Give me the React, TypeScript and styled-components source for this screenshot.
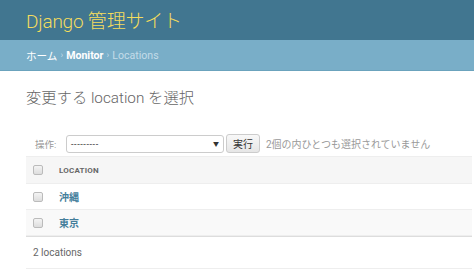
import { createGlobalStyle, styled } from 'styled-components';

const GlobalStyle = createGlobalStyle`
	html, body {
		margin: 0;
		padding: 0;
		background: #fff;
		font-family: Roboto, "Noto Sans CJK JP", "Liberation Sans", sans-serif;
		color: #333;
		overflow: hidden;
	}
`;

const Header = styled.header`
	height: 40px;
	background: #417690;
	display: flex;
	align-items: center;
	padding: 0 26px 2px;
	box-sizing: border-box;
`;

const Branding = styled.h1`
	margin: 0;
	font-size: 19px;
	font-weight: 300;
	color: #f5dd5d;
	letter-spacing: -0.2px;
`;

const Breadcrumbs = styled.div`
	height: 31px;
	background: #79aec8;
	border-bottom: 1px solid #6ba3bd;
	display: flex;
	align-items: center;
	padding: 0 26px;
	box-sizing: border-box;
	font-size: 10.6px;
	color: #c4dce8;
	gap: 3px;
`;

const Crumb = styled.a<{ $bold?: boolean }>`
	color: #fff;
	text-decoration: none;
	font-weight: ${(p) => (p.$bold ? 700 : 400)};
`;

const Sep = styled.span`
	color: #c4dce8;
	font-size: 9px;
`;

const Content = styled.div`
	padding: 0 2px 0 26px;
`;

const Title = styled.h1`
	margin: 17px 0 0;
	height: 20px;
	font-size: 15.3px;
	font-weight: 300;
	color: #666;
	line-height: 20px;
`;

const Actions = styled.div`
	margin-top: 24px;
	height: 23px;
	display: flex;
	align-items: center;
	padding-left: 9px;
	font-size: 9.5px;
	color: #999;
`;

const Label = styled.label`
	width: 31px;
`;

const Select = styled.div`
	width: 158px;
	height: 18px;
	box-sizing: border-box;
	border: 1px solid #ccc;
	border-radius: 3px;
	display: flex;
	align-items: center;
	justify-content: space-between;
	padding: 0 4px;
	color: #333;
	font-size: 9px;
`;

const Dashes = styled.span`
	letter-spacing: 0.6px;
`;

const Arrow = styled.span`
	font-size: 6px;
	color: #333;
`;

const Button = styled.button`
	margin-left: 2px;
	width: 34px;
	height: 19px;
	padding: 0;
	border: 1px solid #ccc;
	border-radius: 3px;
	background: linear-gradient(#f8f8f8, #e6e6e6);
	font-family: inherit;
	font-size: 10px;
	color: #333;
`;

const Counter = styled.span`
	margin-left: 6px;
	font-size: 10px;
	color: #999;
`;

const Table = styled.div`
	margin-top: 1px;
	border-top: 1px solid #eee;
`;

const Row = styled.div<{ $bg?: string; $head?: boolean }>`
	display: flex;
	align-items: center;
	height: ${(p) => (p.$head ? '26px' : '25px')};
	background: ${(p) => p.$bg || '#fff'};
	border-bottom: 1px solid #eee;
	padding-left: 7px;
`;

const Check = styled.span`
	width: 8px;
	height: 8px;
	border: 1px solid #bbb;
	border-radius: 2px;
	background: linear-gradient(#f4f4f4, #ddd);
`;

const HeadCell = styled.span`
	margin-left: 16px;
	font-size: 8px;
	font-weight: 700;
	color: #666;
	letter-spacing: 0.2px;
`;

const Link = styled.a`
	margin-left: 16px;
	font-size: 10px;
	font-weight: 700;
	color: #447e9b;
	text-decoration: none;
`;

const Paginator = styled.div`
	height: 33px;
	border-top: 1px solid #ddd;
	border-bottom: 1px solid #eee;
	display: flex;
	align-items: center;
	padding-left: 7px;
	font-size: 10px;
	color: #666;
	box-sizing: border-box;
`;

const rows = ['沖縄', '東京'];

const App = () => {
	return (
		<>
			<GlobalStyle />
			<Header>
				<Branding>Django 管理サイト</Branding>
			</Header>
			<Breadcrumbs>
				<Crumb>ホーム</Crumb>
				<Sep>›</Sep>
				<Crumb $bold>Monitor</Crumb>
				<Sep>›</Sep>
				<span>Locations</span>
			</Breadcrumbs>
			<Content>
				<Title>変更する location を選択</Title>
				<Actions>
					<Label>操作:</Label>
					<Select>
						<Dashes>---------</Dashes>
						<Arrow>▼</Arrow>
					</Select>
					<Button>実行</Button>
					<Counter>2個の内ひとつも選択されていません</Counter>
				</Actions>
				<Table>
					<Row $head $bg='#f6f6f6'>
						<Check />
						<HeadCell>LOCATION</HeadCell>
					</Row>
					{rows.map((name, i) => (
						<Row key={name} $bg={i % 2 ? '#f9f9f9' : '#fff'}>
							<Check />
							<Link>{name}</Link>
						</Row>
					))}
				</Table>
				<Paginator>2 locations</Paginator>
			</Content>
		</>
	);
};

export default App;
